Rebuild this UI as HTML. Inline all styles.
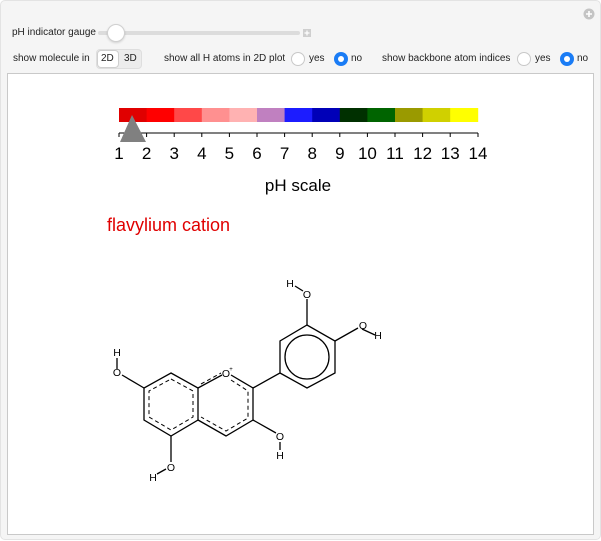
<!DOCTYPE html>
<html><head><meta charset="utf-8"><style>
body{margin:0;width:601px;height:541px;background:#fff;font-family:"Liberation Sans",sans-serif;overflow:hidden}
.outer{position:absolute;left:0;top:0;width:599px;height:538px;background:#f5f5f5;border:1px solid #e3e3e3;border-radius:5px}
.t{position:absolute;font-size:10px;color:#222;white-space:nowrap}
.radio{position:absolute;width:14px;height:14px;border-radius:50%;background:#fff;border:1px solid #c8c8c8;box-sizing:border-box}
.radio.on{background:#1a7cf5;border:none}
.radio.on::after{content:"";position:absolute;left:4px;top:4px;width:6px;height:6px;border-radius:50%;background:#fff}
.inner{position:absolute;left:7px;top:73px;width:585px;height:460px;background:#fff;border:1px solid #c9c9c9}
</style></head><body>
<div class="outer"></div>
<svg style="position:absolute;left:583px;top:8px" width="12" height="12"><circle cx="6" cy="6" r="5.5" fill="#c4c4c4"/><path d="M6 3v6M3 6h6" stroke="#fff" stroke-width="1.6"/></svg>
<div class="t" style="left:12px;top:27px">pH indicator gauge</div>
<div style="position:absolute;left:98px;top:31px;width:202px;height:4px;background:#dcdcdc;border-radius:2px"></div>
<div style="position:absolute;left:107px;top:24px;width:18px;height:18px;border-radius:50%;background:#fff;border:1px solid #d0d0d0;box-sizing:border-box;box-shadow:0 1px 2px rgba(0,0,0,.15)"></div>
<svg style="position:absolute;left:303px;top:29px" width="8" height="8"><rect width="8" height="8" fill="#cfcfcf"/><path d="M4 1.5v5M1.5 4h5" stroke="#fff" stroke-width="1.2"/></svg>
<div class="t" style="left:13px;top:53px">show molecule in</div>
<div style="position:absolute;left:96px;top:49px;width:46px;height:20px;background:#ececec;border:1px solid #dedede;border-radius:4px;box-sizing:border-box"></div>
<div style="position:absolute;left:97px;top:50px;width:22px;height:18px;background:#fff;border:1px solid #cfcfcf;border-radius:4px;box-sizing:border-box"></div>
<div class="t" style="left:101px;top:53px">2D</div>
<div class="t" style="left:124px;top:53px">3D</div>
<div class="t" style="left:164px;top:53px">show all H atoms in 2D plot</div>
<div class="radio" style="left:291px;top:52px"></div>
<div class="t" style="left:309px;top:53px">yes</div>
<div class="radio on" style="left:334px;top:52px"></div>
<div class="t" style="left:351px;top:53px">no</div>
<div class="t" style="left:382px;top:53px">show backbone atom indices</div>
<div class="radio" style="left:517px;top:52px"></div>
<div class="t" style="left:535px;top:53px">yes</div>
<div class="radio on" style="left:560px;top:52px"></div>
<div class="t" style="left:577px;top:53px">no</div>
<div class="inner"></div>
<svg style="position:absolute;left:0;top:0" width="601" height="541" font-family="Liberation Sans, sans-serif">
<g>
<rect x="119" y="108" width="28" height="14" fill="#e00000"/>
<rect x="146.6" y="108" width="28" height="14" fill="#ff0000"/>
<rect x="174.2" y="108" width="28" height="14" fill="#ff4848"/>
<rect x="201.8" y="108" width="28" height="14" fill="#ff9090"/>
<rect x="229.4" y="108" width="28" height="14" fill="#ffb2b2"/>
<rect x="257" y="108" width="28" height="14" fill="#c080c0"/>
<rect x="284.6" y="108" width="28" height="14" fill="#1c1cff"/>
<rect x="312.2" y="108" width="28" height="14" fill="#0000b8"/>
<rect x="339.8" y="108" width="28" height="14" fill="#003000"/>
<rect x="367.4" y="108" width="28" height="14" fill="#006400"/>
<rect x="395" y="108" width="28" height="14" fill="#9a9a00"/>
<rect x="422.6" y="108" width="28" height="14" fill="#d0d000"/>
<rect x="450.2" y="108" width="28" height="14" fill="#ffff00"/>
</g>
<line x1="119" y1="133" x2="478" y2="133" stroke="#000"/>
<g stroke="#000">
<path d="M119 133v4M146.6 133v4M174.2 133v4M201.8 133v4M229.4 133v4M257 133v4M284.6 133v4M312.2 133v4M339.8 133v4M367.4 133v4M395 133v4M422.6 133v4M450.2 133v4M478 133v4"/>
</g>
<polygon points="132,115 120,142 146,142" fill="#808080"/>
<g font-size="17" text-anchor="middle" fill="#000">
<text x="119" y="159">1</text><text x="146.6" y="159">2</text><text x="174.2" y="159">3</text><text x="201.8" y="159">4</text><text x="229.4" y="159">5</text><text x="257" y="159">6</text><text x="284.6" y="159">7</text><text x="312.2" y="159">8</text><text x="339.8" y="159">9</text><text x="367.4" y="159">10</text><text x="395" y="159">11</text><text x="422.6" y="159">12</text><text x="450.2" y="159">13</text><text x="478" y="159">14</text>
<text x="298" y="191">pH scale</text>
</g>
<text x="107" y="231" font-size="18" fill="#e00000">flavylium cation</text>
<g stroke="#000" stroke-width="1.3" fill="none">
<path d="M171 373L198 388L198 420L171 436L144 420L144 388Z"/>
<path d="M198 388L222 375M231 375L253 388L253 420L226 436L198 420"/>
<path d="M253 388L280 373L280 341L307 325L335 341L335 373L307 388L280 373"/>
<circle cx="307" cy="357" r="22"/>
<path d="M307 325L307 299M335 341L358 328M362 329L375 335"/>
<path d="M144 388L122 375M117 369V358"/>
<path d="M253 420L276 433M280 442V450"/>
<path d="M171 436V462M166 469L157 474"/>
<path d="M303 291L295 286"/>
<g stroke-dasharray="4,3" stroke-width="1">
<path d="M171 379L193 391L193 417L171 430L149 417L149 391Z"/>
<path d="M201 384L221 373M231 380L248 391L248 418L226 431L201 417"/>
</g>
</g>
<g font-size="10.5" text-anchor="middle" fill="#000">
<text x="226" y="377">O</text><text x="231" y="371" font-size="6">+</text>
<text x="307" y="298">O</text><text x="290" y="287">H</text>
<text x="363" y="329">O</text><text x="378" y="339">H</text>
<text x="117" y="376">O</text><text x="117" y="356">H</text>
<text x="280" y="440">O</text><text x="280" y="459">H</text>
<text x="171" y="471">O</text><text x="153" y="481">H</text>
</g>
</svg>
</body></html>
